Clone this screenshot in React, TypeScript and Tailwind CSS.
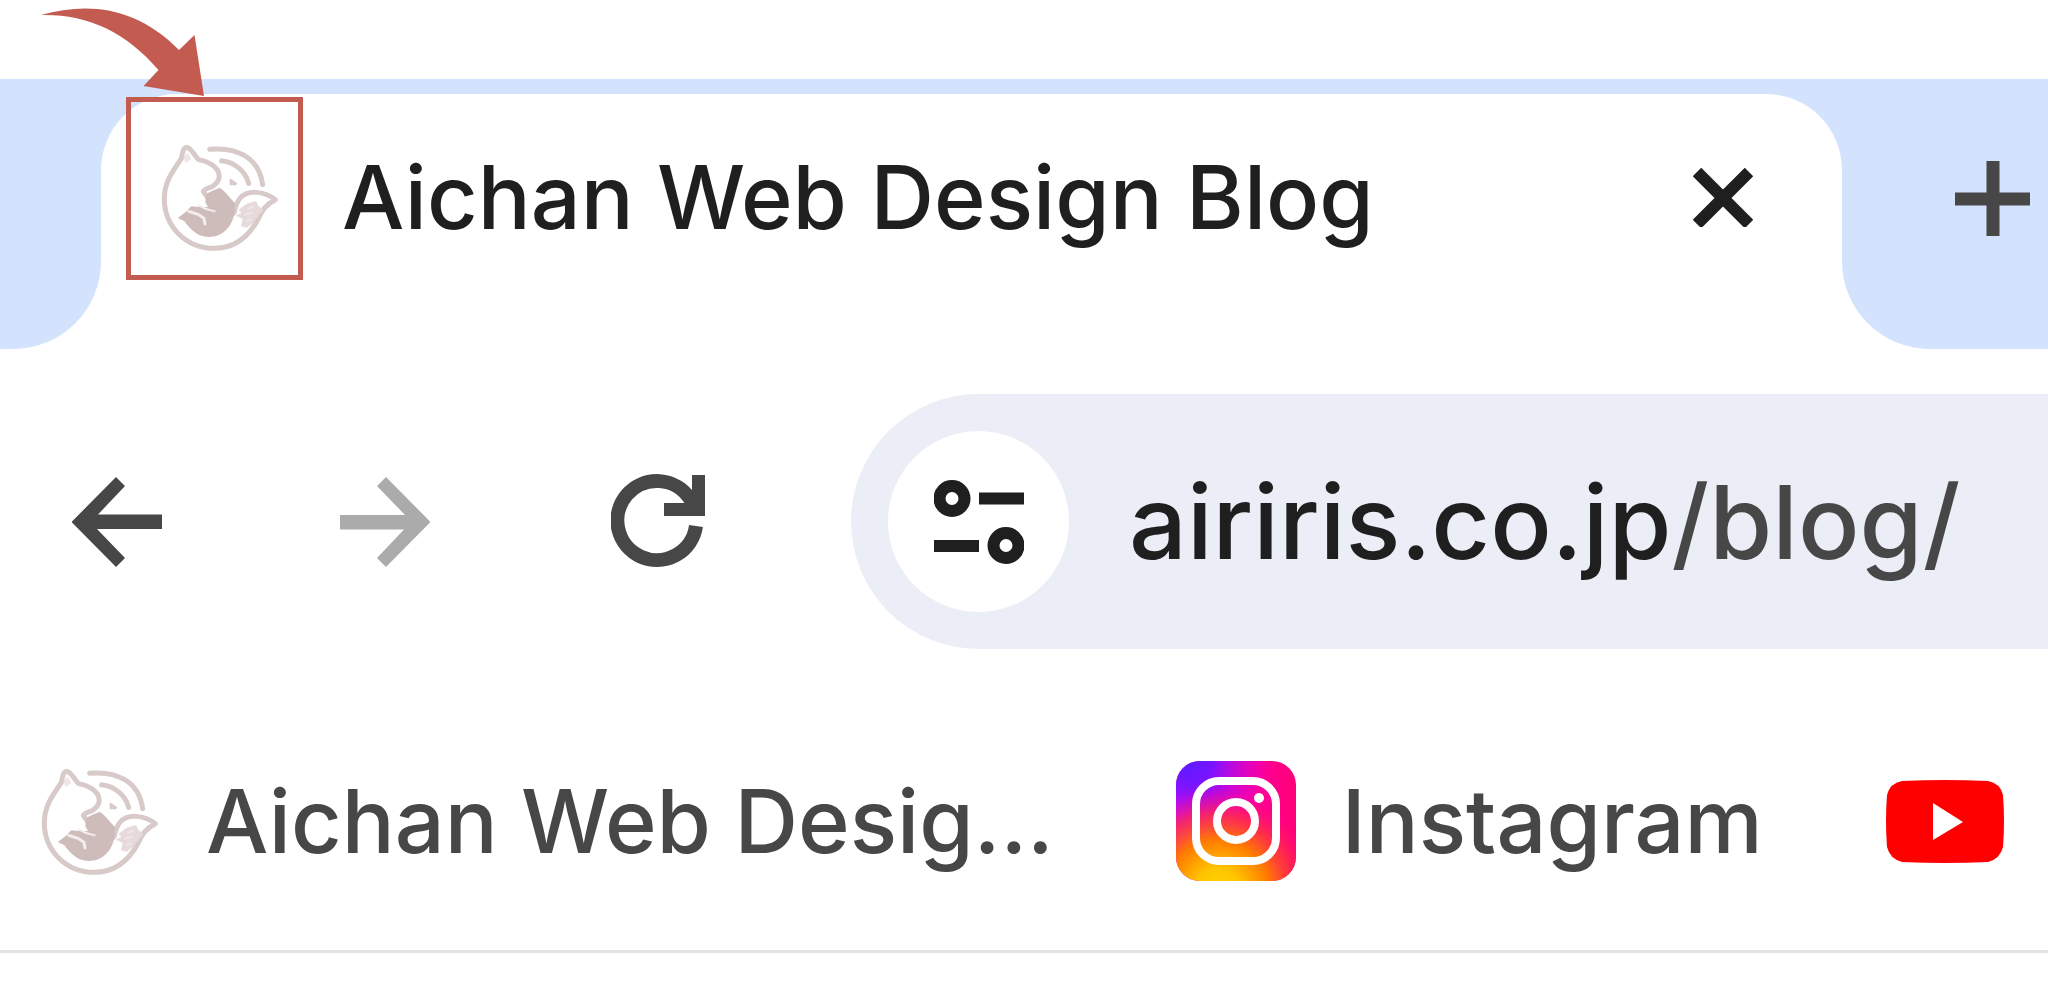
import { useState } from "react";

interface BookmarkProps {
  href: string;
  label: string;
  icon: React.ReactNode;
}

const labelText = "text-[88px] leading-[120px] font-medium whitespace-nowrap";

function FoxIcon() {
  return (
    <svg viewBox="90 54 360 360" className="size-30 shrink-0" fill="none" aria-hidden="true">
      <g stroke="#d8cac9" strokeWidth="15" strokeLinecap="round" strokeLinejoin="round">
        <path d="M156 114C156 98 162 86 171 85C184 88 192 108 205 121C232 127 252 137 263 154C274 177 264 190 246 203C234 207 224 210 220 217C223 224 229 230 232 235" />
        <path d="M155 116C134 152 103 182 103 240C103 322 168 388 253 388C318 388 357 350 383 303C396 274 408 256 436 242C402 215 352 212 330 238C319 250 316 264 312 282" />
        <path d="M239 91C315 83 387 112 398 197" />
        <path d="M275 125C318 130 347 160 356 193" />
      </g>
      <path d="M160 114L166 132L184 122L174 102Z" fill="#eee6e5" />
      <path d="M299 178L322 192L318 199L299 199Z" fill="#d8cac9" />
      <path
        d="M228 226C240 216 258 212 269 206C286 216 300 238 315 252L314 280C306 325 278 354 236 354C200 354 178 326 162 306L143 297L166 280L184 262L206 264L234 264L226 250Z"
        fill="#cdbcba"
      />
      <path d="M176 277L204 286L222 298L225 315" stroke="#f3eded" strokeWidth="9" strokeLinecap="round" />
      <path d="M206 259L228 270L254 277" stroke="#f3eded" strokeWidth="6" strokeLinecap="round" />
      <path
        d="M350 254L378 246L386 262L400 272L384 292L368 312L350 326L333 322L338 300L318 290L334 282L326 272Z"
        fill="#e6dbda"
      />
      <path d="M352 270L370 262M342 288L368 282M350 306L364 300" stroke="#efe8e7" strokeWidth="5" />
    </svg>
  );
}

function InstagramIcon() {
  return (
    <svg viewBox="0 0 120 120" className="size-30 shrink-0" aria-hidden="true">
      <defs>
        <linearGradient id="ig-base" x1="0" y1="0" x2="1" y2="0">
          <stop offset="0" stopColor="#e010ff" />
          <stop offset="0.45" stopColor="#ff00b0" />
          <stop offset="1" stopColor="#ff0078" />
        </linearGradient>
        <radialGradient id="ig-violet" cx="0.1" cy="0" r="0.7">
          <stop offset="0" stopColor="#5a1cff" />
          <stop offset="0.3" stopColor="#7a14ff" />
          <stop offset="1" stopColor="#d800e0" stopOpacity="0" />
        </radialGradient>
        <radialGradient id="ig-warm" cx="0.35" cy="1.08" r="0.85">
          <stop offset="0" stopColor="#ffd600" />
          <stop offset="0.22" stopColor="#ffc400" />
          <stop offset="0.5" stopColor="#ff7a00" />
          <stop offset="0.75" stopColor="#ff3040" stopOpacity="0.75" />
          <stop offset="1" stopColor="#ff0080" stopOpacity="0" />
        </radialGradient>
      </defs>
      <rect width="120" height="120" rx="24" fill="url(#ig-base)" />
      <rect width="120" height="120" rx="24" fill="url(#ig-violet)" />
      <rect width="120" height="120" rx="24" fill="url(#ig-warm)" />
      <g fill="none" stroke="#fff" strokeWidth="8">
        <rect x="20" y="20" width="80" height="80" rx="23" />
        <circle cx="60" cy="60" r="19" />
      </g>
      <circle cx="83" cy="37" r="5" fill="#fff" />
    </svg>
  );
}

function YoutubeIcon() {
  return (
    <svg viewBox="0 0 120 120" className="size-30 shrink-0" aria-hidden="true">
      <path
        d="M17 20Q60 18 103 20Q115 22 118 34Q120 60 118 86Q115 98 103 101Q60 103 17 101Q5 98 2 86Q0 60 2 34Q5 22 17 20Z"
        fill="#f00"
      />
      <path d="M48 42L78 61L48 79Z" fill="#fff" />
    </svg>
  );
}

function ArrowIcon({ className }: { className: string }) {
  return (
    <svg viewBox="0 0 92 92" className={className} fill="currentColor" aria-hidden="true">
      <path d="M45 1L54 10L27 38.500H91V53H26L54 82L45 91L1 46.500V45.500Z" />
    </svg>
  );
}

function Bookmark({ href, label, icon }: BookmarkProps) {
  return (
    <a href={href} className="flex shrink-0 items-center gap-[46px]">
      {icon}
      <span className={labelText}>{label}</span>
    </a>
  );
}

function TabStrip() {
  return (
    <div className="flex h-[270px]">
      <div className="w-[101px] shrink-0 rounded-br-[88px] bg-[#d3e2fd]" />
      <div className="min-w-0 flex-1 bg-[#d3e2fd] pt-[15px]">
        <div className="flex h-full items-start rounded-t-[76px] bg-white pt-[43px] pr-[89px] pl-[59px] text-[#1f1f1f]">
          <div className="relative shrink-0">
            <FoxIcon />
            <div className="absolute -top-10 -left-[34px] h-[183px] w-[177px] border-5 border-[#c35b51]" />
            <svg
              viewBox="40 5 165 92"
              className="absolute -top-33 -left-[120px] h-[92px] w-[165px]"
              aria-hidden="true"
            >
              <path
                d="M41 15C90 1 138 8 179 50L194.500 35L204 96L143.500 86L158.500 70C125 31 87 14 41 15Z"
                fill="#c35b51"
              />
            </svg>
          </div>
          <span className={`${labelText} min-w-0 flex-1 pl-[62px]`}>Aichan Web Design Blog</span>
          <button type="button" aria-label="Close tab" className="flex h-30 shrink-0 items-center">
            <svg viewBox="0 0 60 60" className="size-15" stroke="currentColor" strokeWidth="12" aria-hidden="true">
              <path d="M4 5L56 57M56 5L4 57" />
            </svg>
          </button>
        </div>
      </div>
      <div className="w-[206px] shrink-0 bg-white">
        <div className="flex h-full items-start justify-end rounded-bl-[88px] bg-[#d3e2fd] pt-[82px] pr-[18px] text-[#474747]">
          <button type="button" aria-label="New tab">
            <svg viewBox="0 0 75 75" className="size-[75px]" stroke="currentColor" strokeWidth="13" aria-hidden="true">
              <path d="M0 38H75M38 0V75" />
            </svg>
          </button>
        </div>
      </div>
    </div>
  );
}

function Toolbar() {
  const [url, setUrl] = useState("airiris.co.jp/blog/");

  return (
    <div className="flex items-center pt-[45px] pl-[71px] text-[#474747]">
      <button type="button" aria-label="Back">
        <ArrowIcon className="size-[92px]" />
      </button>
      <button type="button" aria-label="Forward" disabled className="ml-44 text-[#ababab]">
        <ArrowIcon className="size-[92px] rotate-180" />
      </button>
      <button type="button" aria-label="Reload" className="ml-45">
        <svg viewBox="0 0 96 96" className="size-24" aria-hidden="true">
          <path
            d="M85 52A39.500 39.500 0 1 1 79 25"
            fill="none"
            stroke="currentColor"
            strokeWidth="14"
          />
          <path d="M81 1H94V42H53V29H73L81 19Z" fill="currentColor" />
        </svg>
      </button>
      <div className="ml-36 flex h-[255px] min-w-0 flex-1 items-center rounded-l-full bg-[#ebeef6] pl-[37px]">
        <button
          type="button"
          aria-label="View site information"
          className="flex size-[181px] shrink-0 items-center justify-center rounded-full bg-white text-[#1f1f1f]"
        >
          <svg
            viewBox="0 0 90 84"
            className="h-[84px] w-[90px]"
            fill="none"
            stroke="currentColor"
            strokeWidth="12"
            aria-hidden="true"
          >
            <circle cx="18" cy="18.500" r="12.500" />
            <path d="M45 18.500H90M0 66H45" />
            <circle cx="72" cy="65.500" r="12.500" />
          </svg>
        </button>
        <input
          type="text"
          aria-label="Address"
          value={url}
          onChange={(e) => setUrl(e.target.value)}
          className="ml-15 h-40 min-w-0 flex-1 bg-[linear-gradient(90deg,#1f1f1f_542px,#474747_542px)] bg-clip-text text-[102px] font-medium text-transparent caret-[#1f1f1f] outline-none"
        />
      </div>
    </div>
  );
}

export default function App() {
  return (
    <div className="min-h-screen overflow-hidden bg-white pt-[79px] font-['Inter','Liberation_Sans',sans-serif]">
      <TabStrip />
      <Toolbar />
      <nav
        aria-label="Bookmarks"
        className="flex gap-[122px] overflow-hidden border-b-3 border-[#e0e3e0] pt-28 pb-[69px] pl-10 text-[#474747]"
      >
        <Bookmark href="#blog" label="Aichan Web Desig..." icon={<FoxIcon />} />
        <Bookmark href="#instagram" label="Instagram" icon={<InstagramIcon />} />
        <a href="#youtube" aria-label="YouTube" className="shrink-0">
          <YoutubeIcon />
        </a>
      </nav>
    </div>
  );
}
